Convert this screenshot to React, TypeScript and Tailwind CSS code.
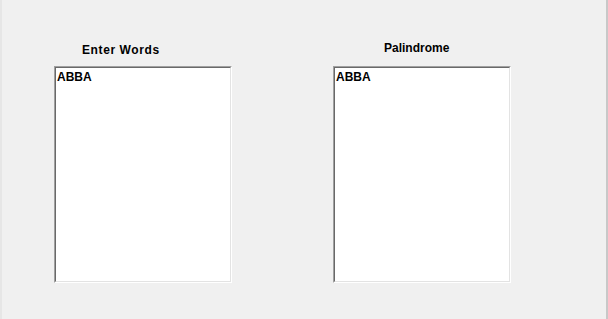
import React from "react";

function SunkenBox({ text }: { text: string }) {
  return (
    <div className="w-[178px] h-[217px] border border-t-[#a0a0a0] border-l-[#a0a0a0] border-b-white border-r-white">
      <div className="w-full h-full bg-white border border-t-[#696969] border-l-[#696969] border-b-[#e3e3e3] border-r-[#e3e3e3] pl-[1px] pt-[2px]">
        <div className="text-[12px] leading-[14px] font-bold text-black">{text}</div>
      </div>
    </div>
  );
}

export default function App() {
  return (
    <div
      className="w-[608px] h-[319px] bg-[#f0f0f0] border-l-2 border-l-[#e6e6e6] border-r-2 border-r-[#c8c8c8] flex"
      style={{ fontFamily: '"Liberation Sans", Arial, sans-serif' }}
    >
      {/* Input words */}
      <div className="ml-[52px] flex flex-col">
        <div className="mt-[43px] ml-[28px] h-[14px] text-[12px] leading-[14px] font-bold text-black tracking-[0.6px]">
          Enter Words
        </div>
        <div className="mt-[9px]">
          <SunkenBox text="ABBA" />
        </div>
      </div>

      {/* Palindromes found */}
      <div className="ml-[101px] flex flex-col">
        <div className="mt-[41px] ml-[51px] h-[14px] text-[12px] leading-[14px] font-bold text-black">
          Palindrome
        </div>
        <div className="mt-[11px]">
          <SunkenBox text="ABBA" />
        </div>
      </div>
    </div>
  );
}
